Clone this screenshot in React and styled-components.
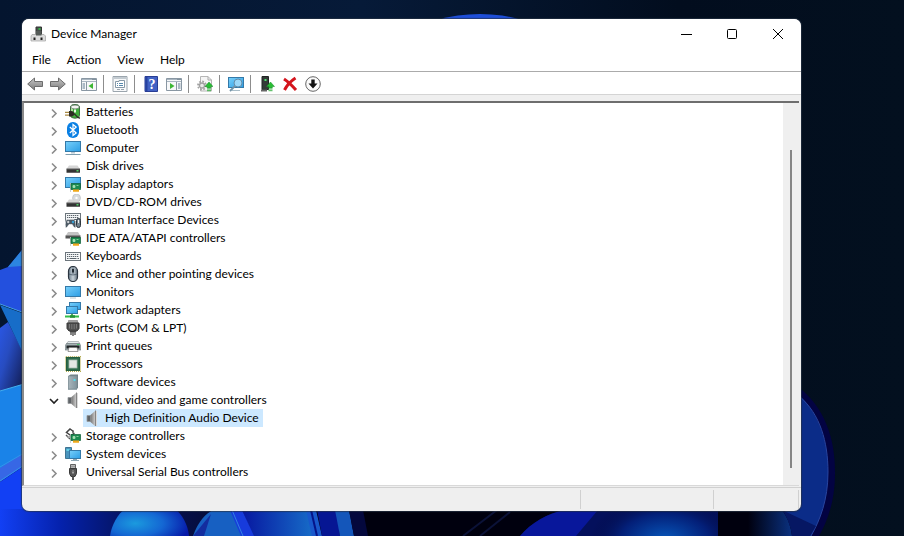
import { useState } from "react";
import styled, { createGlobalStyle } from "styled-components";

const GlobalStyle = createGlobalStyle`
  * {
    box-sizing: border-box;
  }
  body {
    margin: 0;
    background-color: #03122a;
    font-family: Lato, "Open Sans", sans-serif;
    font-size: 12px;
    line-height: 18px;
    font-variant-ligatures: none;
    color: #000;
  }
  button {
    font: inherit;
    font-variant-ligatures: inherit;
    color: inherit;
    background: none;
    border: 0;
    padding: 0;
  }
`;

const Desktop = styled.div`
  position: relative;
  display: flex;
  min-height: 100vh;
  padding: 19px 103px 25px 22px;
`;

// 창 뒤에 깔리는 배경
const Wallpaper = styled.svg`
  position: absolute;
  inset: 0;
  width: 100%;
  height: 100%;
`;

const Defs = styled.svg`
  position: absolute;
  width: 0;
  height: 0;
`;

const Window = styled.main`
  position: relative;
  display: flex;
  flex-direction: column;
  flex: 1;
  min-width: 0;
  overflow: hidden;
  border-radius: 7px;
  background-color: #efefef;
  box-shadow: 0 0 1px 1px rgba(40, 52, 70, 0.7);
`;

const TitleBar = styled.header`
  display: flex;
  align-items: center;
  height: 30px;
  padding-left: 8px;
  background-color: white;
`;

const Title = styled.h1`
  flex: 1;
  margin: 0 0 0 5px;
  font-size: 12px;
  font-weight: 400;
`;

const CaptionBtn = styled.button`
  display: flex;
  align-items: center;
  justify-content: center;
  width: 46px;
  height: 28px;
  &:hover {
    background-color: #e5e5e5;
  }
`;

const MenuBar = styled.nav`
  display: flex;
  height: 23px;
  padding: 2px 2px 3px;
  background-color: white;
  border-bottom: 1px solid #ababab;
`;

const MenuBtn = styled.button`
  padding: 0 8px;
  &:hover {
    background-color: #e5f3ff;
  }
`;

const ToolBar = styled.div`
  display: flex;
  align-items: center;
  height: 23px;
  padding: 1px 1px 0;
  background-color: white;
  border-bottom: 1px solid #d4d4d4;
`;

const ToolBtn = styled.button`
  display: flex;
  align-items: center;
  justify-content: center;
  width: 23px;
  height: 20px;
  &:hover {
    background-color: #e5f3ff;
  }
`;

const Separator = styled.span`
  width: 1px;
  height: 18px;
  margin: 0 4px 0 3px;
  background-color: #8d8d8d;
`;

const Pane = styled.div`
  display: flex;
  flex: 1;
  margin: 6px 2px 0 0;
  border-top: 2px solid #6e6e6e;
  border-left: 2px solid #8a8a8a;
  border-bottom: 1px solid #d9d9d9;
  background-color: white;
`;

const Tree = styled.ul`
  flex: 1;
  min-width: 0;
  margin: 0;
  padding: 0 0 0 24px;
  list-style: none;
`;

const Group = styled.ul`
  margin: 0;
  padding: 0 0 0 35px;
  list-style: none;
`;

const Row = styled.div`
  display: flex;
  align-items: center;
  height: 18px;
`;

const Toggle = styled.button`
  display: flex;
  align-items: center;
  justify-content: center;
  width: 11px;
  height: 18px;
  margin-right: 5px;
  padding-top: 2px;
`;

const Label = styled.button`
  display: flex;
  align-items: center;
  height: 18px;
  padding: 0 4px 0 1px;
  gap: 5px;
  white-space: nowrap;
  background-color: ${(props) => (props.$selected ? "#cce8ff" : "transparent")};
`;

const ScrollTrack = styled.div`
  display: flex;
  justify-content: center;
  width: 16px;
  padding: 47px 0 17px;
  background-color: #efefef;
`;

const ScrollThumb = styled.div`
  width: 2px;
  background-color: #858585;
`;

const StatusBar = styled.footer`
  display: grid;
  grid-template-columns: 1fr 133px 85px;
  height: 24px;
  margin-top: 1px;
  padding: 2px 2px 2px 0;
  border-top: 1px solid #d0d0d0;
`;

const StatusCell = styled.div`
  border-right: 1px solid #d0d0d0;
`;

const Icon = ({ children, size = 16 }) => (
  <svg width={size} height={size} viewBox="0 0 16 16" aria-hidden="true">
    {children}
  </svg>
);

// 아이콘에서 같이 쓰는 조각들
const Screen = ({ x, y, w, h }) => (
  <rect x={x + 0.5} y={y + 0.5} width={w - 1} height={h - 1} fill="url(#screen)" stroke="#3479a8" />
);

const Card = ({ x, y }) => (
  <g transform={`translate(${x} ${y})`}>
    <path d="M.5 0v9" stroke="#c8d3d0" />
    <path d="M1 .5h9.5v6H1z" fill="#1c8a50" stroke="#0b5b35" strokeWidth=".7" />
    <path d="M3 6.5h6v2.2H3z" fill="#efa91b" />
    <path d="M3 2.5h2v2H3zM6.5 2.5h2" fill="#a5e0b4" stroke="#a5e0b4" strokeWidth=".8" />
  </g>
);

const Drive = ({ y = 7 }) => (
  <g transform={`translate(0 ${y})`}>
    <path d="M4 .5h8.5L15 4H1.5z" fill="#d6d6d6" />
    <path d="M1.5 3.8h13.5v4H1.5z" fill="#333" />
    <path d="M1.5 4h13.5" stroke="#777" strokeWidth=".7" />
    <path d="M11.5 5.8h2" stroke="#51d269" strokeWidth="1.4" />
  </g>
);

const Speaker = () => (
  <>
    <path d="M3 5.5h3.5v6H3z" fill="#5f6367" stroke="#96999c" strokeWidth=".8" />
    <path d="M6.5 5 11 1v15l-4.5-4z" fill="url(#metal)" />
    <path d="M11.5 .5v15.5" stroke="#858585" />
    <path d="M12.5 1v15" stroke="#dadada" />
  </>
);

const Keys = ({ y = 4 }) => (
  <g transform={`translate(0 ${y})`}>
    <rect x=".5" y=".5" width="15" height="8" fill="#f5f7f8" stroke="#6c757c" />
    <path
      d="M2 2.5h12M2 4.5h12"
      stroke="#59636b"
      strokeWidth="1.2"
      strokeDasharray="1.3 .7"
    />
    <path d="M2 6.5h1.5M4.5 6.5h7M12.5 6.5H14" stroke="#59636b" />
  </g>
);

const UpArrow = ({ x, y }) => (
  <g transform={`translate(${x} ${y})`}>
    <path d="M4 0 8 4.5H5.8V6H2.2V4.5H0z" fill="#29bd35" stroke="#168d24" strokeWidth=".5" />
    <path d="M2 7h4M2 8.7h4" stroke="#29ad35" strokeWidth=".9" />
  </g>
);

const icons = {
  app: (
    <>
      <path d="M6 1h5.5v8H6z" fill="#48504c" stroke="#333" />
      <path d="M8.5 2h2v2h-2z" fill="#37b34a" />
      <path d="M2 8.5h12l1.5 1.5v5H1v-5z" fill="#dcdcdc" stroke="#a2a2a2" strokeWidth=".7" />
      <path d="M6 5h5.5v4.5H6z" fill="#555b58" />
      <path d="M3.5 11.5h2v2.5h-2zM10.5 11.5h2v2.5h-2z" fill="#222" />
    </>
  ),
  battery: (
    <>
      <path d="M5.5 3c0-3.5 9-3.5 9 0v8.5c0 3.5-9 3.5-9 0z" fill="#3fae3c" stroke="#3b6b3d" />
      <path d="M7 4v5" stroke="#c8f0b8" strokeWidth="1.6" />
      <ellipse cx="10" cy="3" rx="4.2" ry="1.9" fill="#f1f4f0" stroke="#68776b" strokeWidth=".7" />
      <path d="M10 5.5v3" stroke="#e9f8e3" strokeWidth="2" />
      <path d="M4 7h2.2c4 0 4 5.6 0 5.6H4z" fill="#2e2b25" />
      <path d="M0 8.3h4M0 11.2h4" stroke="#a98a45" strokeWidth="1.3" />
      <path d="M9 10c2 0 2.5 4.5 6 4" fill="none" stroke="#2f3029" strokeWidth="1.4" />
    </>
  ),
  bluetooth: (
    <>
      <rect x="2" width="12" height="16" rx="5.8" fill="#0a80e4" />
      <path d="m4.8 5 6.4 6L8 13.5v-11L11.2 5l-6.4 6" fill="none" stroke="#fff" strokeWidth="1.2" />
    </>
  ),
  computer: (
    <>
      <Screen x={0} y={1} w={16} h={11} />
      <path d="M6 12h4v1.5H6z" fill="#b7c8d3" />
      <path d="M.5 14.5h15" stroke="#7e9dae" />
    </>
  ),
  disk: <Drive y={7} />,
  display: (
    <>
      <Screen x={0} y={1} w={16} h={11} />
      <Card x={5} y={7} />
    </>
  ),
  dvd: (
    <>
      <circle cx="11.5" cy="4" r="4" fill="#d7dbdd" stroke="#b6bbbd" strokeWidth=".6" />
      <circle cx="11.5" cy="4" r="1.2" fill="#fff" />
      <Drive y={5} />
    </>
  ),
  hid: (
    <>
      <Keys y={1} />
      <path
        d="M2 7.5h7c1.7 1 2.3 4.5 1.7 8-1.7 1-2.7-2-3.5-3H4c-1 1-2 4-3.5 3-.6-4-.1-7 1.5-8z"
        fill="#4c5964"
        stroke="#fff"
        strokeWidth=".6"
      />
      <path d="M2 10h2.4M3.2 8.8v2.4" stroke="#fff" strokeWidth=".8" />
      <circle cx="8" cy="10" r="1.2" fill="#39a1d6" />
      <rect x="11.5" y="6.5" width="4" height="9" rx="2" fill="#73828c" stroke="#2c353c" />
      <path d="M13.5 8v3" stroke="#eee" />
    </>
  ),
  ide: (
    <>
      <path d="M3 2h10l2.5 4H.5z" fill="#c4c4c4" />
      <path d="M.5 5.5h15v3H.5z" fill="#555" />
      <Card x={5} y={7} />
    </>
  ),
  keyboard: <Keys />,
  mouse: (
    <>
      <rect x="3.5" y=".5" width="9" height="15" rx="4.5" fill="url(#mouse)" stroke="#2b3540" strokeWidth="1.2" />
      <path d="M8 1v7M4 8c2 1.2 6 1.2 8 0" fill="none" stroke="#445462" strokeWidth=".8" />
      <path d="M8 3v3.5" stroke="#1d262e" strokeWidth="1.9" />
    </>
  ),
  monitor: (
    <>
      <Screen x={0} y={2} w={16} h={11} />
      <path d="M5 14h6" stroke="#b8c7ce" />
    </>
  ),
  network: (
    <>
      <Screen x={4} y={0} w={12} h={8} />
      <Screen x={1} y={4} w={12} h={8} />
      <path d="M6 12h2v2H6z" fill="#51ad58" />
      <path d="M0 14.5h14" stroke="#35bd4a" strokeWidth="2" />
      <path d="M5 14.5h5" stroke="#268e39" strokeWidth="2.5" />
    </>
  ),
  port: (
    <>
      <path d="M3.5.5h9v2.5h-9z" fill="#a2a2a2" stroke="#777" strokeWidth=".6" />
      <path d="M2 3h12v5.5L12 11H4L2 8.5z" fill="#505050" stroke="#383838" />
      <path d="M4.5 4v4.5M6.8 4v5M9.2 4v5M11.5 4v4.5" stroke="#8d8d8d" strokeWidth=".7" />
      <path d="M5 11.5h6M6 12v3M8 12v4M10 12v3" stroke="#444" strokeWidth="1.3" />
    </>
  ),
  printer: (
    <>
      <path d="M3 3.5h10.5L15 6H1.5z" fill="#e5eced" stroke="#9ca4a7" strokeWidth=".7" />
      <path d="M1.5 5.5h13L16 8v4H0V8z" fill="#a5b1b4" stroke="#647074" strokeWidth=".6" />
      <path d="M1.5 7.5h13v3h-13z" fill="#1f2527" />
      <path d="M4 9.5h8l1 4H3z" fill="#f8f8f8" stroke="#777" strokeWidth=".7" />
      <path d="M12 6.5h2.5" stroke="#47c568" />
    </>
  ),
  processor: (
    <>
      <rect x=".8" y=".8" width="14.4" height="14.4" fill="none" stroke="#b3ab51" strokeWidth="1.6" strokeDasharray="1 1" />
      <rect x="1.5" y="1.5" width="13" height="13" fill="#2d6b4b" stroke="#245d40" />
      <rect x="4" y="4" width="8" height="8" fill="#e5e8e6" stroke="#a9bbb1" strokeWidth=".8" />
    </>
  ),
  software: (
    <>
      <path d="m3.5 2 2-1.5H13v13L11.5 15h-8z" fill="#6d7e86" />
      <path d="M3.5 2H12v13H3.5z" fill="url(#tower)" stroke="#7b8c93" strokeWidth=".7" />
      <path d="M8.5 5h2v2h-2z" fill="#54dceb" />
      <path d="M3 15.5h9" stroke="#9aa8ae" />
    </>
  ),
  speaker: <Speaker />,
  storage: (
    <>
      <path d="M8.5 3.5 5 1 1.5 4.5 6 7.5 9.5 5" fill="none" stroke="#454545" strokeWidth="1.5" />
      <path d="M8 2.5v2.5M1 7l4 4" stroke="#555" strokeWidth="1.4" />
      <path d="M2.5 9.5 6 7.5" stroke="#aaa" strokeWidth="1.6" />
      <Card x={5} y={6} />
    </>
  ),
  system: (
    <>
      <path d="M.5 1.5h6v11h-6z" fill="#4a94bd" stroke="#3f7592" />
      <path d="M1.5 4h3" stroke="#6ee6f2" strokeWidth="1.5" />
      <Screen x={4} y={4} w={12} h={9} />
      <path d="M8 13h4v1H8z" fill="#90a5af" />
      <path d="M6 14.5h8" stroke="#91a9b6" />
    </>
  ),
  usb: (
    <>
      <path d="M5.5.5h5v4h-5z" fill="#d4d4d4" stroke="#636363" />
      <path d="M7 1.5v2M9 1.5v2" stroke="#444" strokeWidth=".8" />
      <path d="M4.5 4.5h7v5l-1.5 3H6l-1.5-3z" fill="#555" stroke="#393939" />
      <path d="M8 12v4" stroke="#444" strokeWidth="1.8" />
      <path d="M8 6v4M6.8 8 8 9l1.2-1" stroke="#bbb" strokeWidth=".7" fill="none" />
    </>
  ),
};

const Panel = ({ flip }) => (
  <>
    <path d="M.5 2.5h15v12H.5z" fill="#f7f8f9" stroke="#8997a3" />
    <path d="M1 3.5h14M1 5.5h14" stroke="#a9b6c1" />
    <path d="M11.5 3.5h3" stroke="#596c79" strokeDasharray="1 1" />
    {flip ? (
      <>
        <path d="M10.5 6v8" stroke="#8997a3" />
        <path d="M12 8h2.5M12 10h2.5M12 12h2.5" stroke="#607c93" />
        <path d="m4 7 4.5 3L4 13z" fill="#3eb635" />
      </>
    ) : (
      <>
        <path d="M5.5 6v8" stroke="#8997a3" />
        <path d="M1.5 8H4M1.5 10H4M1.5 12H4" stroke="#607c93" />
        <path d="m12 7-4.5 3 4.5 3z" fill="#3eb635" />
      </>
    )}
  </>
);

const toolIcons = {
  back: <path d="m.7 8 6.8-6v3.5h8v5h-8V14z" fill="url(#arrow)" stroke="#6d6d6d" />,
  forward: <path d="m15.3 8-6.8-6v3.5h-8v5h8V14z" fill="url(#arrow)" stroke="#6d6d6d" />,
  tree: <Panel />,
  properties: (
    <>
      <path d="M1 .5h14v15H1z" fill="#f8f9fa" stroke="#9ba5ad" />
      <path d="M1.5 2h13" stroke="#c3cbd1" strokeWidth="2" />
      <path d="M3.5 5.5H7v-1h5.5v7h-9z" fill="#fff" stroke="#8799a7" />
      <path d="M5 7.5h1M7 7.5h4M5 9.5h1M7 9.5h4" stroke="#5689ad" />
      <path d="M5 13.5h3M9 13.5h3" stroke="#9aa5ae" />
    </>
  ),
  help: (
    <>
      <path d="M2 .5h12.5v15H2z" fill="#4262c4" stroke="#283d94" />
      <path d="M3.5 1v14" stroke="#27439f" strokeWidth="2" />
      <text x="9" y="13" textAnchor="middle" fill="#fff" fontFamily="Liberation Serif, serif" fontSize="14" fontWeight="700">
        ?
      </text>
    </>
  ),
  action: <Panel flip />,
  update: (
    <>
      <path d="M3.5.5H11L14.5 4v11h-11z" fill="#f5f5f5" stroke="#b6b6b6" />
      <path d="M11 .5V4h3.5" fill="none" stroke="#aaa" />
      <circle cx="5" cy="9.5" r="4" fill="none" stroke="#a2a2a2" strokeWidth="1.8" strokeDasharray="1.7 1.4" />
      <circle cx="5" cy="9.5" r="2.5" fill="#e9e9e9" stroke="#a1a1a1" strokeWidth="1.3" />
      <UpArrow x={8} y={6} />
    </>
  ),
  scan: (
    <>
      <Screen x={0} y={1} w={16} h={11} />
      <path d="M4 14.5h8" stroke="#a9bdc8" />
      <circle cx="10" cy="7" r="4" fill="#9bd7f8" stroke="#648ca8" />
      <path d="m7 10-5 5" stroke="#7192a7" strokeWidth="1.8" />
    </>
  ),
  enable: (
    <>
      <path d="M3 .5h6.5v13H3z" fill="#343a37" stroke="#202422" />
      <path d="M5.5 3h2v2h-2z" fill="#51df72" />
      <path d="M2 14.5h6" stroke="#666" strokeWidth="2" />
      <UpArrow x={7.5} y={6} />
    </>
  ),
  remove: <path d="M2 3c4 2.5 8 6.5 12 11M13.5 2C9 5 5 9 2.5 14" fill="none" stroke="#d4151d" strokeWidth="3" />,
  disable: (
    <>
      <circle cx="8" cy="8" r="7.3" fill="#fafafa" stroke="#666" />
      <path d="M6.3 3.5h3.4v4h2.8L8 12.5 3.5 7.5h2.8z" fill="#111" />
    </>
  ),
};

const tools = [
  ["back", "Back"],
  ["forward", "Forward"],
  null,
  ["tree", "Show/Hide Console Tree"],
  null,
  ["properties", "Properties"],
  null,
  ["help", "Help"],
  ["action", "Show/Hide Action Pane"],
  null,
  ["update", "Update driver"],
  null,
  ["scan", "Scan for hardware changes"],
  null,
  ["enable", "Enable device"],
  ["remove", "Uninstall device"],
  ["disable", "Disable device"],
];

const devices = [
  { icon: "battery", name: "Batteries" },
  { icon: "bluetooth", name: "Bluetooth" },
  { icon: "computer", name: "Computer" },
  { icon: "disk", name: "Disk drives" },
  { icon: "display", name: "Display adaptors" },
  { icon: "dvd", name: "DVD/CD-ROM drives" },
  { icon: "hid", name: "Human Interface Devices" },
  { icon: "ide", name: "IDE ATA/ATAPI controllers" },
  { icon: "keyboard", name: "Keyboards" },
  { icon: "mouse", name: "Mice and other pointing devices" },
  { icon: "monitor", name: "Monitors" },
  { icon: "network", name: "Network adapters" },
  { icon: "port", name: "Ports (COM & LPT)" },
  { icon: "printer", name: "Print queues" },
  { icon: "processor", name: "Processors" },
  { icon: "software", name: "Software devices" },
  {
    icon: "speaker",
    name: "Sound, video and game controllers",
    children: ["High Definition Audio Device"],
  },
  { icon: "storage", name: "Storage controllers" },
  { icon: "system", name: "System devices" },
  { icon: "usb", name: "Universal Serial Bus controllers" },
];

function Gradients() {
  return (
    <Defs aria-hidden="true">
      <defs>
        <linearGradient id="screen" x1="0" y1="0" x2="1" y2="1">
          <stop offset="0" stopColor="#78d0fb" />
          <stop offset="1" stopColor="#2c9de4" />
        </linearGradient>
        <linearGradient id="metal">
          <stop offset="0" stopColor="#777" />
          <stop offset="1" stopColor="#c9c9c9" />
        </linearGradient>
        <linearGradient id="mouse">
          <stop offset="0" stopColor="#6c7d8b" />
          <stop offset=".5" stopColor="#c9d3da" />
          <stop offset="1" stopColor="#62717e" />
        </linearGradient>
        <linearGradient id="tower">
          <stop offset="0" stopColor="#a8b5bb" />
          <stop offset="1" stopColor="#81949d" />
        </linearGradient>
        <linearGradient id="arrow" x1="0" y1="0" x2="0" y2="1">
          <stop offset="0" stopColor="#c7c7c7" />
          <stop offset="1" stopColor="#7c7c7c" />
        </linearGradient>
      </defs>
    </Defs>
  );
}

function Bloom() {
  return (
    <Wallpaper viewBox="0 0 904 536" preserveAspectRatio="xMidYMid slice" aria-hidden="true">
      <defs>
        <linearGradient id="sky">
          <stop offset="0" stopColor="#04152f" />
          <stop offset=".4" stopColor="#061a38" />
          <stop offset=".75" stopColor="#020d1e" />
          <stop offset="1" stopColor="#03101f" />
        </linearGradient>
        <linearGradient id="floor">
          <stop offset="0" stopColor="#1240f4" />
          <stop offset=".16" stopColor="#0522ae" />
          <stop offset=".33" stopColor="#051465" />
          <stop offset=".56" stopColor="#060d3c" />
          <stop offset="1" stopColor="#00000c" />
        </linearGradient>
        <radialGradient id="disc" cx=".32" cy=".65" r=".7">
          <stop offset="0" stopColor="#1b9ade" />
          <stop offset=".5" stopColor="#1467d3" />
          <stop offset="1" stopColor="#0619a8" />
        </radialGradient>
        <radialGradient id="glow">
          <stop offset="0" stopColor="#0757bb" />
          <stop offset=".6" stopColor="#031f78" />
          <stop offset="1" stopColor="#020940" stopOpacity="0" />
        </radialGradient>
        <linearGradient id="fold">
          <stop offset="0" stopColor="#0717a0" />
          <stop offset="1" stopColor="#176dc8" />
        </linearGradient>
        <linearGradient id="shade" x1="0" y1="0" x2="1" y2="1">
          <stop offset="0" stopColor="#2a57e4" />
          <stop offset=".4" stopColor="#274cc0" />
          <stop offset="1" stopColor="#111b51" />
        </linearGradient>
        <linearGradient id="petal">
          <stop offset="0" stopColor="#00000e" />
          <stop offset="1" stopColor="#0a3180" />
        </linearGradient>
      </defs>
      <rect width="904" height="536" fill="url(#sky)" />
      <ellipse cx="480" cy="34" rx="58" ry="20" fill="#1e4ed8" />
      {/* 왼쪽 꽃잎 */}
      <path d="M0 270 8 267 22 250v62L0 304z" fill="#2350de" />
      <path d="m8 267 14-17v16z" fill="#2c85e0" />
      <path d="M0 328 8 322l14 28v36L0 392z" fill="url(#shade)" />
      <path d="m0 305 22 8v38z" fill="#176dc8" />
      <path d="m0 304 22 8" stroke="#46a0ec" />
      <path d="m0 391 24-7v72L0 470z" fill="#1a83e8" />
      <path d="m0 391 24-7" stroke="#43b0ee" />
      <path d="m0 468 24-15v13L0 482z" fill="#3767e5" />
      <path d="m0 467 24-14M0 481l24-16" stroke="#3194ea" />
      <path d="m0 482 24-16v70H0z" fill="#1240f4" />
      {/* 오른쪽 꽃잎 */}
      <path d="M796 385c29 22 39 53 39 88 0 29-8 49-16 63h-28V385z" fill="#030342" />
      <path d="M796 392c22 19 32 48 32 80 0 28-8 48-17 64h-40V392z" fill="#0b2c88" />
      <path d="M800 397c20 17 28 45 28 75 0 28-8 48-17 64" fill="none" stroke="#28459f" />
      {/* 아래쪽 꽃잎 */}
      <path d="M0 509h370v27H0z" fill="url(#floor)" />
      <path d="M360 509h424l10 27H360z" fill="#00000e" />
      <path d="M110 536c3-20 18-36 40-36s37 16 39 36z" fill="url(#disc)" />
      <path d="M193 536c5-14 12-22 20-26h20l11 26z" fill="#1760c2" />
      <path d="m193 536 18-22-7 22z" fill="#132d9f" />
      <path d="M242 510h65l7 26h-61z" fill="url(#fold)" />
      <path d="M230 510h12l12 26h-13z" fill="#173bdc" />
      <path d="m232 510 11 26" stroke="#3183e2" />
      <path d="M306 510h10l6 26h-10z" fill="#1958cc" />
      <path d="M311 510 317 536" stroke="#05148a" strokeWidth="2" />
      <path d="M317 510h20l3 26h-18z" fill="#061693" />
      <path d="M335 510h14l5 26h-14z" fill="#1456ba" />
      <path d="M349 510h14l5 26h-14z" fill="#04083d" />
      <path d="m463 536 34-26M480 536l30-24" stroke="#0b1238" strokeWidth="2" />
      <path d="M520 536c12-14 27-22 44-26h154l2 26z" fill="#04105c" />
      <ellipse cx="665" cy="540" rx="75" ry="44" fill="url(#glow)" />
      <path d="M718 509h30v27h-30z" fill="#00000e" />
      <path d="M520 536c12-14 27-22 44-26h34l-22 26z" fill="#08179b" />
      <path d="M748 510h34c6 8 9 17 10 26h-44z" fill="url(#petal)" />
      <path d="M782 510c6 8 9 17 10 26h18l6-10z" fill="#061763" />
    </Wallpaper>
  );
}

function App() {
  const [open, setOpen] = useState(["Sound, video and game controllers"]);
  const [selected, setSelected] = useState("High Definition Audio Device");

  const toggle = (name) =>
    setOpen(open.includes(name) ? open.filter((item) => item !== name) : [...open, name]);

  return (
    <Desktop>
      <GlobalStyle />
      <Gradients />
      <Bloom />
      <Window>
        <TitleBar>
          <Icon>{icons.app}</Icon>
          <Title>Device Manager</Title>
          <CaptionBtn aria-label="Minimize">
            <svg width="11" height="11" viewBox="0 0 11 11">
              <path d="M0 5.5h11" stroke="#000" />
            </svg>
          </CaptionBtn>
          <CaptionBtn aria-label="Maximize">
            <svg width="10" height="10" viewBox="0 0 10 10">
              <rect x=".5" y=".5" width="9" height="9" rx="1" fill="none" stroke="#000" />
            </svg>
          </CaptionBtn>
          <CaptionBtn aria-label="Close">
            <svg width="10" height="10" viewBox="0 0 10 10">
              <path d="m0 0 10 10M10 0 0 10" stroke="#000" />
            </svg>
          </CaptionBtn>
        </TitleBar>

        <MenuBar>
          {["File", "Action", "View", "Help"].map((item) => (
            <MenuBtn key={item}>{item}</MenuBtn>
          ))}
        </MenuBar>

        <ToolBar role="toolbar" aria-label="Device tools">
          {tools.map((tool, i) =>
            tool ? (
              <ToolBtn key={tool[0]} aria-label={tool[1]}>
                <Icon>{toolIcons[tool[0]]}</Icon>
              </ToolBtn>
            ) : (
              <Separator key={i} />
            )
          )}
        </ToolBar>

        <Pane>
          <Tree>
            {devices.map((device) => {
              const expanded = Boolean(device.children) && open.includes(device.name);
              return (
                <li key={device.name}>
                  <Row>
                    <Toggle
                      aria-label={`Toggle ${device.name}`}
                      aria-expanded={expanded}
                      onClick={() => toggle(device.name)}
                    >
                      <svg width="10" height="10" viewBox="0 0 10 10">
                        <path
                          d={expanded ? "m1 3 4 4 4-4" : "m3 1.5 4 4-4 4"}
                          fill="none"
                          stroke={expanded ? "#222" : "#8c8c8c"}
                          strokeWidth="1.6"
                        />
                      </svg>
                    </Toggle>
                    <Label
                      $selected={selected === device.name}
                      onClick={() => setSelected(device.name)}
                    >
                      <Icon>{icons[device.icon]}</Icon>
                      {device.name}
                    </Label>
                  </Row>
                  {expanded && (
                    <Group>
                      {device.children.map((child) => (
                        <li key={child}>
                          <Row>
                            <Label
                              $selected={selected === child}
                              onClick={() => setSelected(child)}
                            >
                              <Icon>{icons[device.icon]}</Icon>
                              {child}
                            </Label>
                          </Row>
                        </li>
                      ))}
                    </Group>
                  )}
                </li>
              );
            })}
          </Tree>
          <ScrollTrack>
            <ScrollThumb />
          </ScrollTrack>
        </Pane>

        <StatusBar>
          <StatusCell />
          <StatusCell />
          <StatusCell />
        </StatusBar>
      </Window>
    </Desktop>
  );
}

export default App;
